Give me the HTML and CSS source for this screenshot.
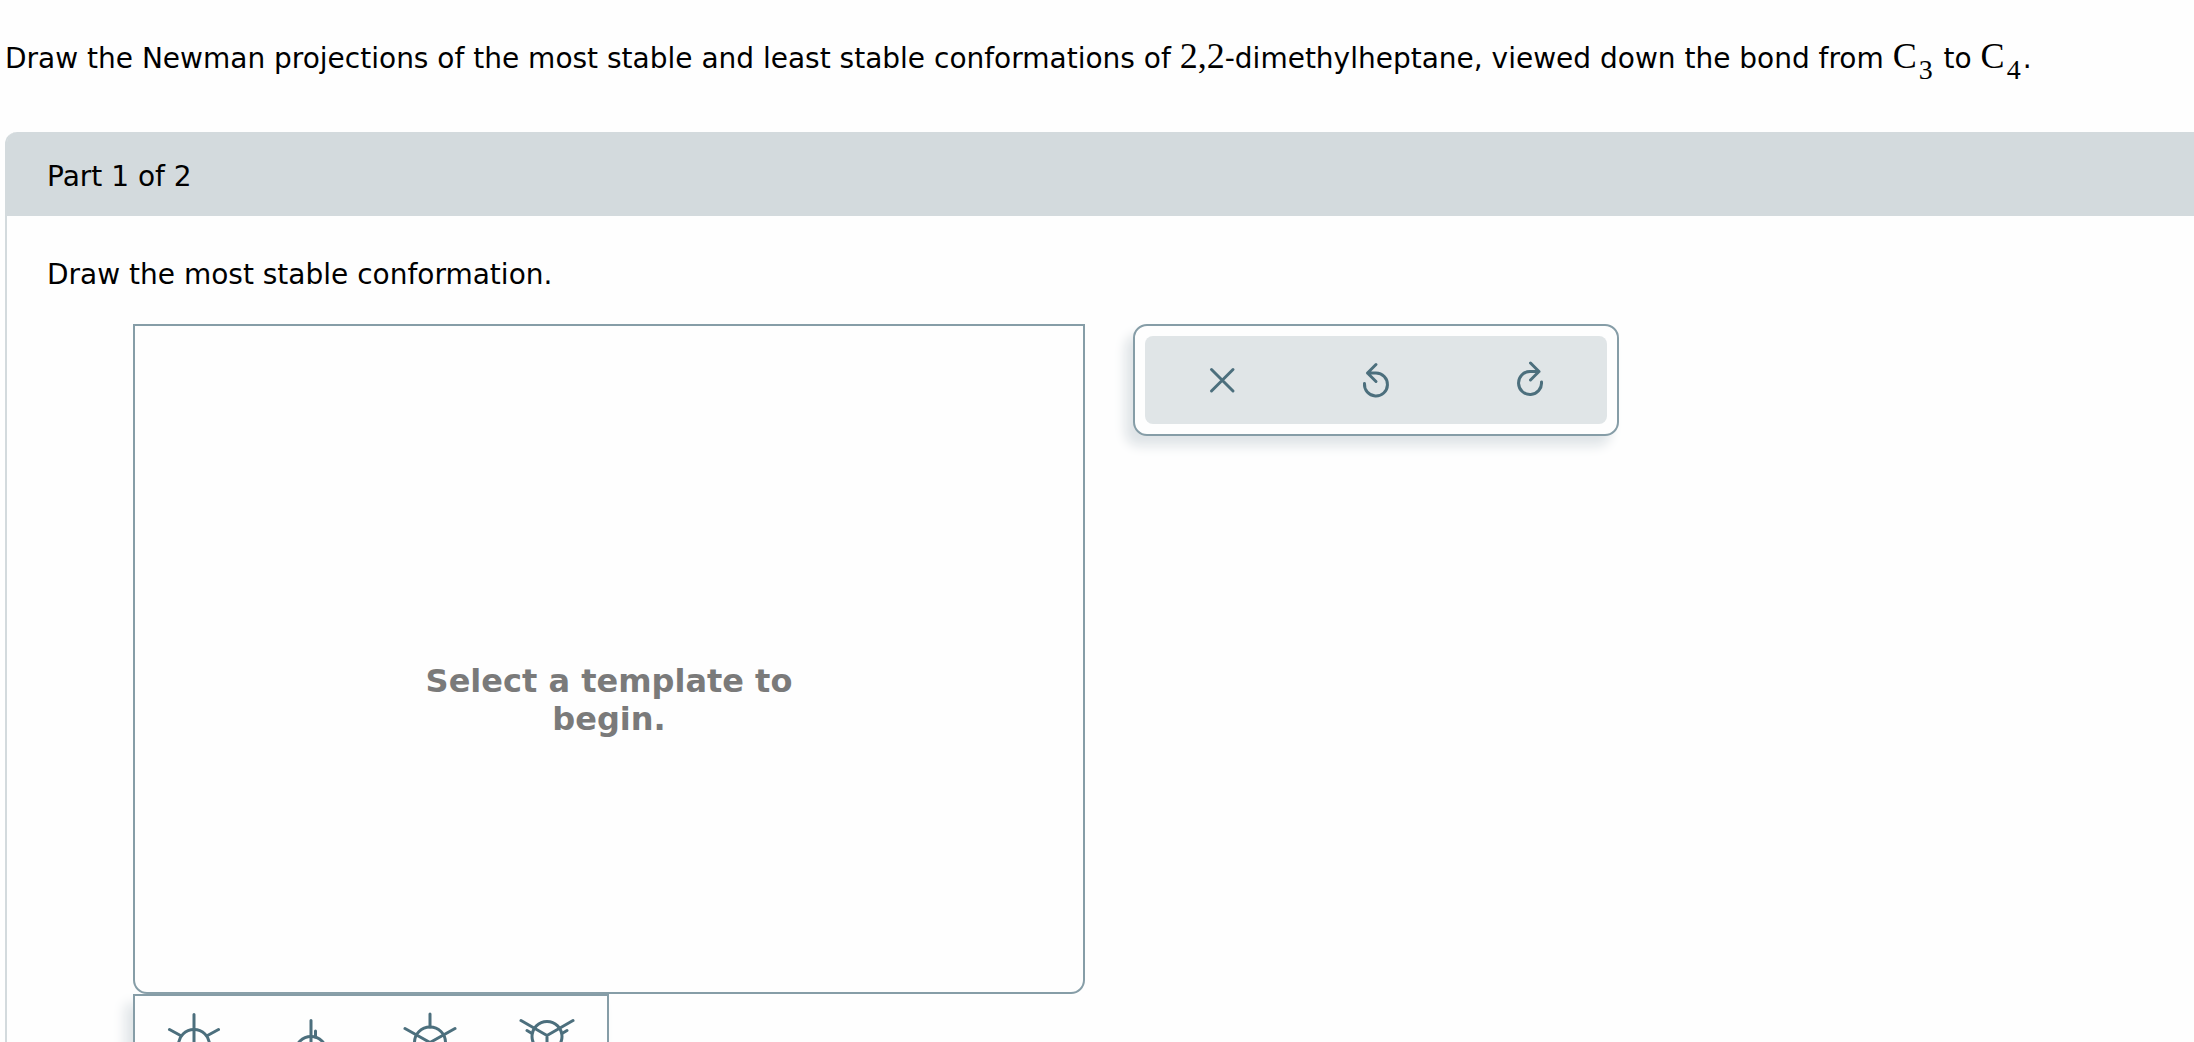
FILE: index.html
```
<!DOCTYPE html>
<html lang="en">
<head>
  <meta charset="UTF-8">
  <meta name="viewport" content="width=device-width, initial-scale=1">
  <title>Newman projections</title>
  <link rel="stylesheet" href="styles.css">
</head>
<body>
  <p class="question">Draw the Newman projections of the most stable and least stable conformations of <span class="math">2,2</span>-dimethylheptane, viewed down the bond from <span class="math">C<sub>3</sub></span> to <span class="math">C<sub>4</sub></span>.</p>

  <section class="part">
    <h2 class="part-header">Part 1 of 2</h2>
    <div class="part-body">
      <p class="prompt">Draw the most stable conformation.</p>

      <div class="editor">
        <div class="drawing">
          <div class="canvas">
            <p class="message">Select a template to begin.</p>
          </div>
          <div class="templates">
            <button class="template" type="button" aria-label="Staggered">
              <svg viewBox="0 0 118 118">
                <circle cx="59" cy="49" r="15.5"/>
                <path d="M59 18.500V49M59 49L33 64M59 49L85 64M34.500 33.500L45.500 39.500M83.500 33.500L72.500 39.500M59 65V79"/>
              </svg>
            </button>
            <button class="template" type="button" aria-label="Eclipsed">
              <svg viewBox="0 0 118 118">
                <circle cx="58" cy="56" r="15.5"/>
                <path d="M58 24.500V56M58 56L32 71M58 56L84 71M62.500 35V41M43 69L39 75M76 62L81 65"/>
              </svg>
            </button>
            <button class="template" type="button" aria-label="Staggered, inverted">
              <svg viewBox="0 0 118 118">
                <circle cx="59" cy="46.500" r="15.5"/>
                <path d="M59 18V31M34 32.500L59 46.500L84 32.500M59 46.500V77M45.500 54L34 61M72.500 54L84 61"/>
              </svg>
            </button>
            <button class="template" type="button" aria-label="Eclipsed, inverted">
              <svg viewBox="0 0 118 118">
                <circle cx="58" cy="40.500" r="15"/>
                <path d="M32 24.500L58 39.500L84 24.500M58 39.500V70M38 34.500L43 37.500M78 34.500L73 37.500M63 56V62"/>
              </svg>
            </button>
          </div>
        </div>

        <div class="toolbar">
          <div class="toolbar-buttons">
            <button class="tool" type="button" aria-label="Clear">
              <svg viewBox="0 0 60 60"><path d="M19.500 19.500L41 41M41 19.500L19.500 41"/></svg>
            </button>
            <button class="tool" type="button" aria-label="Undo">
              <svg viewBox="0 0 60 60"><path d="M18.500 33.500A11.500 11.500 0 1 0 30 23H21.500M30 14.500L21.500 23L30 31.500"/></svg>
            </button>
            <button class="tool" type="button" aria-label="Redo">
              <svg viewBox="0 0 60 60"><path d="M41.500 32A11.500 11.500 0 1 1 30 21.500H39M30.500 13L39 21.500L30.500 30"/></svg>
            </button>
          </div>
        </div>
      </div>
    </div>
  </section>
</body>
</html>
```
FILE: styles.css
```
* {
  box-sizing: border-box;
}

body {
  height: 100vh;
  margin: 0;
  padding-left: 5px;
  overflow: hidden;
  background-color: #fefefe;
  color: #000;
  font-family: Verdana, "DejaVu Sans", sans-serif;
  font-size: 28px;
  line-height: 36px;
}

.question {
  margin: 0;
  padding: 38px 0 55px;
}

.math {
  font-family: "Times New Roman", "Liberation Serif", serif;
  font-size: 36px;
}

.math sub {
  margin: 0 2px;
  font-size: 28px;
  line-height: 0;
  vertical-align: -11px;
}

/* The panel runs off the right side of the window */
.part {
  border-left: 2px solid #d3dadd;
  border-radius: 12px 0 0 0;
}

.part-header {
  margin: 0;
  padding: 27px 40px 21px;
  border-radius: 10px 0 0 0;
  background-color: #d3dadd;
  font-size: 28px;
  font-weight: normal;
}

.part-body {
  padding: 41px 40px;
}

.prompt {
  margin: 0 0 31px;
}

.editor {
  display: flex;
  align-items: flex-start;
  gap: 48px;
  padding-left: 86px;
}

.drawing {
  width: 952px;
}

.canvas {
  display: flex;
  align-items: center;
  justify-content: center;
  height: 670px;
  padding-top: 82px;
  border: 2px solid #869da7;
  border-radius: 0 0 14px 14px;
}

.message {
  max-width: 400px;
  margin: 0;
  color: #7a7a7a;
  font-size: 32px;
  font-weight: bold;
  line-height: 38px;
  text-align: center;
}

.templates {
  display: inline-flex;
  border: 2px solid #869da7;
  background-color: #fefefe;
  box-shadow: -8px 10px 12px #dfe4e7;
}

button {
  padding: 0;
  border: 0;
  background: none;
  cursor: pointer;
}

svg {
  display: block;
  fill: none;
  stroke: #4c6f7d;
  stroke-width: 3;
  stroke-linecap: round;
  stroke-linejoin: round;
}

.template svg {
  width: 118px;
  height: 118px;
}

.toolbar {
  padding: 10px;
  border: 2px solid #869da7;
  border-radius: 14px;
  background-color: #fefefe;
  box-shadow: -8px 10px 12px #dfe4e7;
}

.toolbar-buttons {
  display: flex;
  border-radius: 8px;
  background-color: #e0e5e7;
}

.tool {
  display: flex;
  align-items: center;
  justify-content: center;
  width: 154px;
  height: 88px;
}

.tool svg {
  width: 60px;
  height: 60px;
}
```
